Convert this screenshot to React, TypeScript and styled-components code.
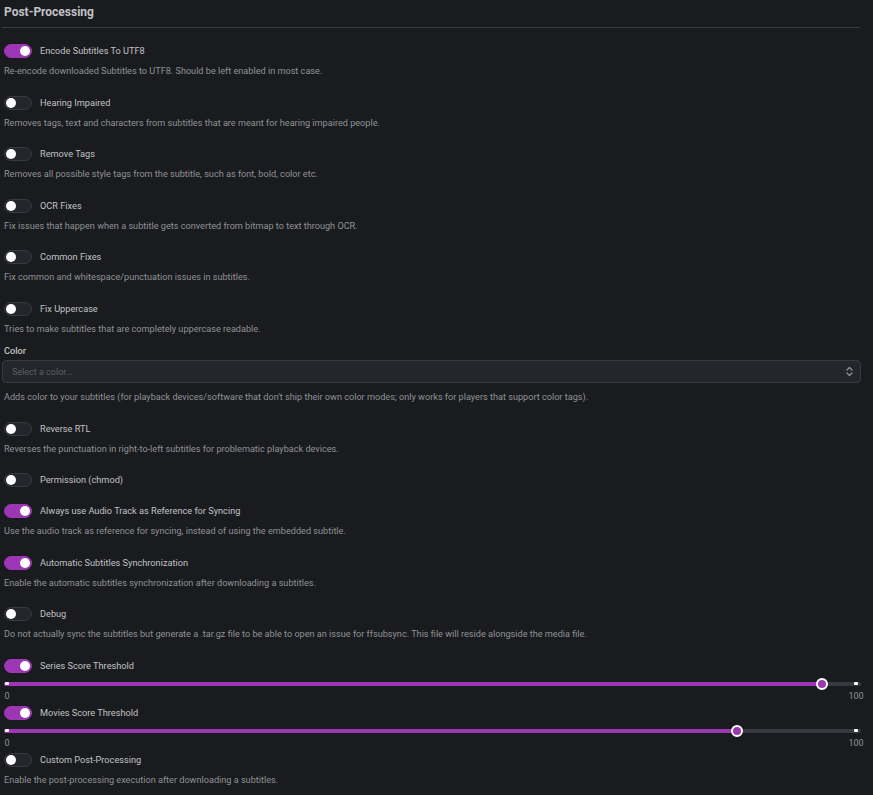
import React from "react";
import styled, { createGlobalStyle } from "styled-components";

const Global = createGlobalStyle`
  html, body { margin: 0; padding: 0; background: #1a1b1e; }
  body { font-family: Roboto, "Noto Sans", "Liberation Sans", sans-serif; -webkit-font-smoothing: antialiased; }
  * { box-sizing: border-box; }
`;

const PURPLE = "#9c36b5";

const Page = styled.div`
  background: #1a1b1e;
  min-height: 795px;
  padding: 0 12px 0 2px;
  display: flex;
  flex-direction: column;
`;

const Title = styled.h4`
  margin: 4px 0 0 2px;
  font-size: 12px;
  line-height: 16px;
  font-weight: 700;
  color: #c1c2c5;
`;

const Divider = styled.hr`
  margin: 7px 0 16px 0;
  border: 0;
  border-top: 1px solid #373a40;
  width: 858px;
`;

const List = styled.div`
  display: flex;
  flex-direction: column;
`;

const Field = styled.div<{ $mb?: number }>`
  display: flex;
  flex-direction: column;
  margin-bottom: ${(p) => (p.$mb ?? 18.5)}px;
`;

const SwitchRow = styled.label`
  display: flex;
  align-items: center;
  gap: 8px;
  height: 14px;
  padding-left: 2px;
  cursor: pointer;
`;

const Track = styled.span<{ $on: boolean }>`
  position: relative;
  width: 28px;
  height: 14px;
  border-radius: 7px;
  flex: none;
  background: ${(p) => (p.$on ? PURPLE : "#25262b")};
  border: 1px solid ${(p) => (p.$on ? PURPLE : "#373a40")};
`;

const Thumb = styled.span<{ $on: boolean }>`
  position: absolute;
  top: 1px;
  left: ${(p) => (p.$on ? "15px" : "1px")};
  width: 10px;
  height: 10px;
  border-radius: 50%;
  background: #ffffff;
`;

const Label = styled.span`
  font-size: 9.2px;
  line-height: 12px;
  color: #c1c2c5;
`;

const Description = styled.div<{ $mt?: number }>`
  margin-top: ${(p) => p.$mt ?? 7}px;
  padding-left: 2px;
  font-size: 9.15px;
  line-height: 12px;
  color: #909296;
  white-space: nowrap;
`;

const FieldLabel = styled.div`
  padding-left: 2px;
  font-size: 9.2px;
  line-height: 12px;
  font-weight: 500;
  color: #c1c2c5;
`;

const SelectBox = styled.div`
  margin-top: 3px;
  height: 23px;
  width: 859px;
  border: 1px solid #373a40;
  border-radius: 4px;
  background: #25262b;
  display: flex;
  align-items: center;
  justify-content: space-between;
  padding: 0 6px 0 9px;
`;

const Placeholder = styled.span`
  font-size: 9px;
  color: #5c5f66;
`;

const SliderRoot = styled.div`
  position: relative;
  margin: 5px 0 0 2px;
  width: 857px;
  height: 12px;
`;

const SliderTrack = styled.div`
  position: absolute;
  left: 0;
  right: 0;
  top: 4px;
  height: 4px;
  border-radius: 2px;
  background: #373a40;
`;

const Scale = styled.div`
  position: absolute;
  left: 3px;
  right: 5px;
  top: 0;
  bottom: 0;
`;

const Fill = styled.div`
  position: absolute;
  left: -3px;
  top: 4px;
  height: 4px;
  border-radius: 2px;
  background: ${PURPLE};
`;

const MarkDot = styled.span`
  position: absolute;
  top: 4.5px;
  width: 4px;
  height: 3px;
  margin-left: -2px;
  border-radius: 1px;
  background: #ffffff;
`;

const SliderThumb = styled.span`
  position: absolute;
  top: 0px;
  width: 12px;
  height: 12px;
  margin-left: -6px;
  border-radius: 50%;
  background: ${PURPLE};
  border: 2px solid #ffffff;
`;

const MarkLabels = styled.div`
  position: relative;
  margin: 1px 0 0 5px;
  width: 849px;
  height: 11px;
`;

const MarkText = styled.span`
  position: absolute;
  top: 0;
  transform: translateX(-50%);
  font-size: 9px;
  line-height: 10px;
  color: #909296;
`;

type SwitchProps = { label: string; on?: boolean };

const Switch = ({ label, on = false }: SwitchProps) => (
  <SwitchRow>
    <Track $on={on}>
      <Thumb $on={on} />
    </Track>
    <Label>{label}</Label>
  </SwitchRow>
);

const SwitchField = ({
  label,
  on,
  description,
  mb,
}: SwitchProps & { description?: string; mb?: number }) => (
  <Field $mb={mb}>
    <Switch label={label} on={on} />
    {description && <Description>{description}</Description>}
  </Field>
);

const Slider = ({ value }: { value: number }) => (
  <>
    <SliderRoot>
      <SliderTrack />
      <Scale>
        <Fill style={{ width: `calc(${value}% + 3px)` }} />
        <MarkDot style={{ left: "0%" }} />
        <MarkDot style={{ left: "100%" }} />
        <SliderThumb style={{ left: `${value}%` }} />
      </Scale>
    </SliderRoot>
    <MarkLabels>
      <MarkText style={{ left: "0%" }}>0</MarkText>
      <MarkText style={{ left: "100%" }}>100</MarkText>
    </MarkLabels>
  </>
);

const UpDown = () => (
  <svg width="9" height="11" viewBox="0 0 9 11" fill="none" stroke="#909296" strokeWidth="1.3" strokeLinecap="round" strokeLinejoin="round">
    <path d="M2 4 L4.5 1.5 L7 4" />
    <path d="M2 7 L4.5 9.5 L7 7" />
  </svg>
);

export default function App() {
  return (
    <>
      <Global />
      <Page>
        <Title>Post-Processing</Title>
        <Divider />
        <List>
          <SwitchField
            on
            label="Encode Subtitles To UTF8"
            description="Re-encode downloaded Subtitles to UTF8. Should be left enabled in most case."
          />
          <SwitchField
            label="Hearing Impaired"
            description="Removes tags, text and characters from subtitles that are meant for hearing impaired people."
          />
          <SwitchField
            label="Remove Tags"
            description="Removes all possible style tags from the subtitle, such as font, bold, color etc."
          />
          <SwitchField
            label="OCR Fixes"
            description="Fix issues that happen when a subtitle gets converted from bitmap to text through OCR."
          />
          <SwitchField
            label="Common Fixes"
            description="Fix common and whitespace/punctuation issues in subtitles."
          />
          <SwitchField
            label="Fix Uppercase"
            description="Tries to make subtitles that are completely uppercase readable."
            mb={10.5}
          />
          <Field>
            <FieldLabel>Color</FieldLabel>
            <SelectBox>
              <Placeholder>Select a color...</Placeholder>
              <UpDown />
            </SelectBox>
            <Description $mt={8}>
              Adds color to your subtitles (for playback devices/software that don't ship their own color modes; only works for players that support color tags).
            </Description>
          </Field>
          <SwitchField
            label="Reverse RTL"
            description="Reverses the punctuation in right-to-left subtitles for problematic playback devices."
          />
          <SwitchField label="Permission (chmod)" mb={17} />
          <SwitchField
            on
            label="Always use Audio Track as Reference for Syncing"
            description="Use the audio track as reference for syncing, instead of using the embedded subtitle."
          />
          <SwitchField
            on
            label="Automatic Subtitles Synchronization"
            description="Enable the automatic subtitles synchronization after downloading a subtitles."
          />
          <SwitchField
            label="Debug"
            description="Do not actually sync the subtitles but generate a .tar.gz file to be able to open an issue for ffsubsync. This file will reside alongside the media file."
          />
          <Field $mb={4}>
            <Switch on label="Series Score Threshold" />
            <Slider value={96} />
          </Field>
          <Field $mb={4}>
            <Switch on label="Movies Score Threshold" />
            <Slider value={86} />
          </Field>
          <SwitchField
            label="Custom Post-Processing"
            description="Enable the post-processing execution after downloading a subtitles."
          />
        </List>
      </Page>
    </>
  );
}
